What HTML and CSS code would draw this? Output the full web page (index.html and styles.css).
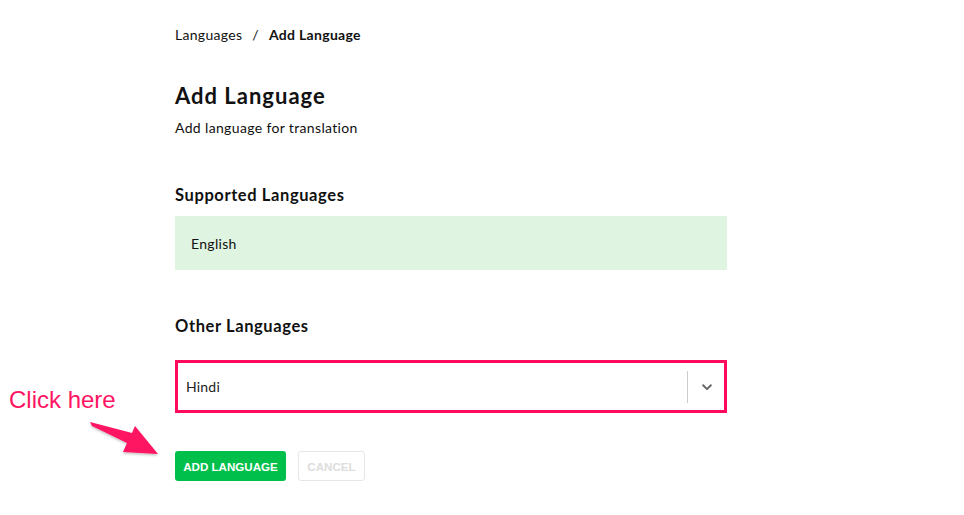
FILE: index.html
```html
<!DOCTYPE html>
<html>
<head>
<meta charset="utf-8">
<link rel="stylesheet" href="styles.css">
</head>
<body>
<div class="page">
  <aside class="hint">
    <div class="hint-text">Click here</div>
    <svg class="hint-arrow" width="80" height="45" viewBox="85 418 80 45">
      <defs>
        <filter id="sh" x="-20%" y="-20%" width="150%" height="160%">
          <feDropShadow dx="0" dy="1.5" stdDeviation="1.2" flood-color="#000" flood-opacity="0.25"/>
        </filter>
      </defs>
      <polygon filter="url(#sh)" fill="#ff1464" points="90,422 132,433 135,426 158,454 123,452 127,443 92,426"/>
    </svg>
  </aside>
  <main class="content">
    <nav class="crumbs"><span>Languages</span><span class="sep">/</span><strong>Add Language</strong></nav>
    <h1 class="title">Add Language</h1>
    <p class="subtitle">Add language for translation</p>
    <h2 class="section">Supported Languages</h2>
    <div class="supported">English</div>
    <h2 class="section other">Other Languages</h2>
    <div class="select">
      <span class="select-value">Hindi</span>
      <span class="select-sep"></span>
      <span class="select-arrow">
        <svg width="14" height="14" viewBox="0 0 20 20"><path d="M4.5 7.5 L10 13 L15.5 7.5" fill="none" stroke="#666" stroke-width="2.8" stroke-linecap="round" stroke-linejoin="round"/></svg>
      </span>
    </div>
    <div class="actions">
      <button class="btn btn-primary">ADD LANGUAGE</button>
      <button class="btn btn-cancel">CANCEL</button>
    </div>
  </main>
</div>
</body>
</html>
```
FILE: styles.css
```css
* { box-sizing: border-box; }
html, body { margin: 0; padding: 0; background: #fff; }
body { font-family: "Lato", "Inter", sans-serif; color: #111; }
.page { position: relative; width: 964px; height: 515px; }
.content { margin-left: 175px; width: 552px; padding-top: 26px; }
.crumbs { font-size: 14px; letter-spacing: 0.3px; line-height: 18px; display: flex; }
.crumbs .sep { margin: 0 10px; }
.crumbs strong { font-weight: 700; }
.title { font-size: 22px; letter-spacing: 1px; font-weight: 700; margin: 38px 0 0; line-height: 28px; }
.subtitle { font-size: 14px; letter-spacing: 0.35px; margin: 9px 0 0; line-height: 18px; }
.section { font-size: 16.5px; letter-spacing: 0.6px; font-weight: 700; margin: 48px 0 0; line-height: 20px; }
.section.other { margin-top: 46px; }
.supported { margin-top: 11px; height: 54px; background: #dff5e1; display: flex; align-items: center; padding-left: 16px; font-size: 14px; letter-spacing: 0.3px; }
.select { margin-top: 24px; height: 53px; border: 3px solid #ff0a5c; display: flex; align-items: center; padding-left: 8px; }
.select-value { flex: 1; font-size: 14px; letter-spacing: 0.2px; color: #222; }
.select-sep { width: 1px; height: 32px; background: #ccc; }
.select-arrow { width: 36px; display: flex; justify-content: center; align-items: center; padding-left: 2px; }
.actions { margin-top: 38px; display: flex; gap: 12px; }
.btn { font-family: "Liberation Sans", Arial, sans-serif; font-weight: 700; font-size: 11.6px; height: 30px; border-radius: 3px; cursor: pointer; padding: 0; }
.btn-primary { width: 111px; background: #00c04b; color: #fff; border: none; }
.btn-cancel { width: 67px; background: #fff; color: #ddd; border: 1px solid #e6e6e6; }
.hint { position: absolute; left: 0; top: 0; }
.hint-text { position: absolute; left: 9px; top: 386px; font-family: "Liberation Sans", Arial, sans-serif; font-size: 24px; color: #ff1464; white-space: nowrap; }
.hint-arrow { position: absolute; left: 85px; top: 418px; }
```
